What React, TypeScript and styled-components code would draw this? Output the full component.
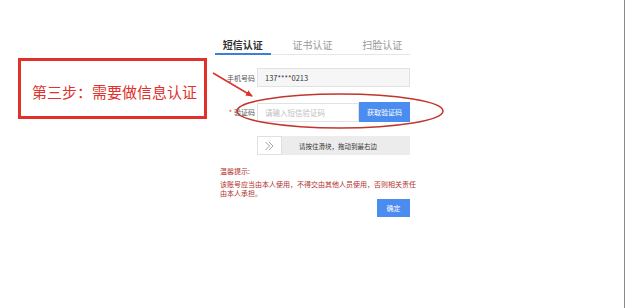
import React from "react";
import styled, { createGlobalStyle } from "styled-components";

const Global = createGlobalStyle`
  html, body { margin: 0; padding: 0; background: #fff; }
  body { font-family: "Noto Sans CJK SC", "Noto Sans", sans-serif; }
`;

const Page = styled.div`
  position: relative;
  width: 625px;
  height: 308px;
  border-right: 1px solid #8a8a8a;
  background: #fff;
  display: flex;
  align-items: flex-start;
  padding-top: 38px;
  box-sizing: border-box;
`;

const Callout = styled.div`
  margin-left: 18px;
  margin-top: 20px;
  width: 189px;
  height: 61px;
  box-sizing: border-box;
  border: 3px solid #e2312b;
  display: flex;
  align-items: center;
  justify-content: center;
  padding-top: 6px;
  padding-left: 4px;
  color: #e2312b;
  font-size: 15px;
`;

const Form = styled.div`
  margin-left: 8px;
  width: 195px;
  display: flex;
  flex-direction: column;
`;

const Tabs = styled.div`
  display: flex;
  gap: 14px;
  border-bottom: 1px solid #e6e6e6;
`;

const Tab = styled.div<{ $active?: boolean }>`
  width: 58px;
  height: 15px;
  text-align: center;
  font-size: 10px;
  line-height: 14px;
  font-weight: ${(p) => (p.$active ? 700 : 400)};
  color: ${(p) => (p.$active ? "#333" : "#999")};
  border-bottom: 2px solid ${(p) => (p.$active ? "#3b7fd9" : "transparent")};
  margin-bottom: -1px;
`;

const Row = styled.div<{ $top: number }>`
  display: flex;
  align-items: center;
  margin-top: ${(p) => p.$top}px;
`;

const Label = styled.div`
  width: 42px;
  padding-right: 2px;
  box-sizing: border-box;
  text-align: right;
  font-size: 7px;
  color: #555;
  white-space: nowrap;
`;

const Star = styled.span`
  color: #e2312b;
  margin-right: 2px;
`;

const Field = styled.div<{ $filled?: boolean }>`
  flex: 1;
  height: 19px;
  box-sizing: border-box;
  border: 1px solid #e2e2e2;
  background: ${(p) => (p.$filled ? "#f6f6f6" : "#fff")};
  display: flex;
  align-items: center;
  padding-left: 7px;
  font-size: 7.5px;
  color: ${(p) => (p.$filled ? "#333" : "#c0c0c0")};
`;

const CodeButton = styled.div`
  width: 51px;
  height: 20px;
  background: #4a8cf0;
  color: #fff;
  font-size: 7px;
  display: flex;
  align-items: center;
  justify-content: center;
`;

const Slider = styled.div`
  margin-left: 42px;
  margin-top: 14px;
  height: 19px;
  background: #ececec;
  display: flex;
  align-items: center;
`;

const Handle = styled.div`
  width: 25px;
  height: 19px;
  box-sizing: border-box;
  background: #fff;
  border: 1px solid #e0e0e0;
  display: flex;
  align-items: center;
  justify-content: center;
`;

const SliderText = styled.div`
  margin-left: 17px;
  font-size: 6.5px;
  color: #333;
`;

const Tip = styled.div`
  margin-left: 5px;
  margin-top: 12px;
  color: #b0302c;
  font-size: 7px;
  line-height: 9px;
`;

const TipBody = styled.div`
  margin-top: 4px;
  width: 200px;
  white-space: nowrap;
`;

const Footer = styled.div`
  display: flex;
  justify-content: flex-end;
  margin-top: 1px;
`;

const Confirm = styled.div`
  width: 33px;
  height: 18px;
  background: #4a8cf0;
  color: #fff;
  font-size: 7px;
  display: flex;
  align-items: center;
  justify-content: center;
`;

const Overlay = styled.svg`
  position: absolute;
  left: 0;
  top: 0;
  pointer-events: none;
`;

export default function App() {
  return (
    <>
      <Global />
      <Page>
        <Callout>第三步：需要做信息认证</Callout>
        <Form>
          <Tabs>
            <Tab $active>短信认证</Tab>
            <Tab>证书认证</Tab>
            <Tab>扫脸认证</Tab>
          </Tabs>
          <Row $top={13}>
            <Label>手机号码</Label>
            <Field $filled>137****0213</Field>
          </Row>
          <Row $top={15}>
            <Label>
              <Star>*</Star>验证码
            </Label>
            <Field>请输入短信验证码</Field>
            <CodeButton>获取验证码</CodeButton>
          </Row>
          <Slider>
            <Handle>
              <svg width="11" height="10" viewBox="0 0 11 10">
                <path d="M1.5 1 L5.5 5 L1.5 9 M5 1 L9 5 L5 9" fill="none" stroke="#9a9a9a" strokeWidth="0.9" />
              </svg>
            </Handle>
            <SliderText>请按住滑块，拖动到最右边</SliderText>
          </Slider>
          <Tip>
            <div>温馨提示:</div>
            <TipBody>
              该账号应当由本人使用，不得交由其他人员使用，否则相关责任
              <br />
              由本人承担。
            </TipBody>
          </Tip>
          <Footer>
            <Confirm>确定</Confirm>
          </Footer>
        </Form>
        <Overlay width="626" height="308" viewBox="0 0 626 308">
          <defs>
            <marker id="ah" markerWidth="8" markerHeight="8" refX="6" refY="4" orient="auto" markerUnits="userSpaceOnUse">
              <path d="M0,1 L7,4 L0,7 Z" fill="#d9342b" />
            </marker>
          </defs>
          <line x1="213" y1="73" x2="252" y2="96" stroke="#d9342b" strokeWidth="1.5" markerEnd="url(#ah)" />
          <ellipse cx="340" cy="111" rx="103" ry="17" fill="none" stroke="#c0362c" strokeWidth="1.5" />
        </Overlay>
      </Page>
    </>
  );
}
